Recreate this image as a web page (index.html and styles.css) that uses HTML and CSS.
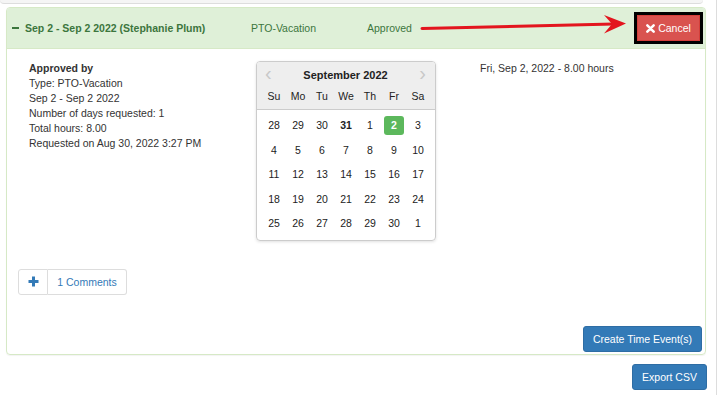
FILE: index.html
```html
<!DOCTYPE html>
<html lang="en">
<head>
<meta charset="utf-8"/>
<title>Time off request</title>
<link rel="stylesheet" href="styles.css">
</head>
<body>
<div class="page">
  <div class="prev-panel"></div>

  <div class="panel">
    <div class="panel-heading">
      <div class="req-title"><span class="collapse-bar"></span>Sep 2 - Sep 2 2022 (Stephanie Plum)</div>
      <div class="req-type">PTO-Vacation</div>
      <div class="req-status">Approved</div>
      <div class="cancel-outline">
        <button class="btn-danger">
          <svg width="9" height="9" viewBox="0 0 10 10"><path d="M1.5 1.5 L8.5 8.5 M8.5 1.5 L1.5 8.5" stroke="#fff" stroke-width="2.8" stroke-linecap="round"/></svg>
          Cancel
        </button>
      </div>
    </div>

    <div class="panel-body">
      <div class="details">
        <div class="details-info">
          <b>Approved by</b><br/>
          Type: PTO-Vacation<br/>
          Sep 2 - Sep 2 2022<br/>
          Number of days requested: 1<br/>
          Total hours: 8.00<br/>
          Requested on Aug 30, 2022 3:27 PM
        </div>

        <div class="calendar">
          <div class="cal-head">
            <div class="cal-title">
              <span class="cal-nav">&lsaquo;</span>
              <b>September 2022</b>
              <span class="cal-nav">&rsaquo;</span>
            </div>
            <div class="cal-grid cal-days">
              <span>Su</span><span>Mo</span><span>Tu</span><span>We</span><span>Th</span><span>Fr</span><span>Sa</span>
            </div>
          </div>
          <div class="cal-grid cal-body">
            <span>28</span><span>29</span><span>30</span><span class="today">31</span><span>1</span><span><i class="picked">2</i></span><span>3</span>
            <span>4</span><span>5</span><span>6</span><span>7</span><span>8</span><span>9</span><span>10</span>
            <span>11</span><span>12</span><span>13</span><span>14</span><span>15</span><span>16</span><span>17</span>
            <span>18</span><span>19</span><span>20</span><span>21</span><span>22</span><span>23</span><span>24</span>
            <span>25</span><span>26</span><span>27</span><span>28</span><span>29</span><span>30</span><span>1</span>
          </div>
        </div>

        <div class="day-list">Fri, Sep 2, 2022 - 8.00 hours</div>
      </div>

      <div class="btn-group">
        <button class="btn-default btn-plus">
          <svg width="11" height="11" viewBox="0 0 11 11"><path d="M5.5 0.5 V10.5 M0.5 5.5 H10.5" stroke="#337ab7" stroke-width="3"/></svg>
        </button>
        <button class="btn-default btn-comments">1 Comments</button>
      </div>

      <div class="panel-actions">
        <button class="btn-primary">Create Time Event(s)</button>
      </div>
    </div>
  </div>

  <div class="page-actions">
    <button class="btn-primary">Export CSV</button>
  </div>

  <!-- annotation arrow pointing at the cancel button -->
  <svg class="arrow" width="723" height="60" viewBox="0 0 723 60">
    <path d="M422 28.5 L614 24" stroke="#e3151e" stroke-width="3" stroke-linecap="round"/>
    <path d="M626 23.5 L604 15 L612 24 L604 33.5 Z" fill="#e3151e"/>
  </svg>
</div>
</body>
</html>
```

FILE: styles.css
```css
body {
    margin: 0;
    font-family: "Liberation Sans", Arial, sans-serif;
    font-size: 10.5px;
    color: #333;
    background-color: #fff;
}
button {
    font-family: inherit;
    font-size: 10.5px;
    white-space: nowrap;
    cursor: pointer;
}
.page {
    position: relative;
    width: 717px;
    height: 395px;
    border-right: 1px solid #ddd;
    box-sizing: border-box;
}
.prev-panel {
    width: 703px;
    height: 3px;
    background-color: #f5f5f5;
    border-bottom: 1px solid #ddd;
    border-radius: 0 0 4px 4px;
}
.panel {
    width: 700px;
    margin: 3px 0 0 6px;
    border: 1px solid #d6e9c6;
    border-radius: 4px;
    box-sizing: border-box;
    box-shadow: 0 1px 1px rgba(0, 0, 0, 0.05);
}
.panel-heading {
    display: flex;
    align-items: center;
    height: 40px;
    padding: 0 2px 0 5px;
    background-color: #dff0d8;
    border-bottom: 1px solid #d6e9c6;
    color: #3c763d;
    border-radius: 3px 3px 0 0;
}
.req-title {
    width: 239px;
    font-weight: bold;
}
.collapse-bar {
    display: inline-block;
    width: 7px;
    height: 2px;
    background-color: #3c763d;
    vertical-align: middle;
    margin: 0 6px 2px 0;
}
.req-type {
    width: 116px;
}
.req-status {
    flex: 1;
}
.cancel-outline {
    border: 3px solid #000;
    display: flex;
}
.btn-danger {
    width: 63px;
    height: 26px;
    border: 1px solid #d43f3a;
    background-color: #d9534f;
    color: #fff;
    padding: 0;
    display: flex;
    align-items: center;
    justify-content: center;
    gap: 3px;
}
.panel-body {
    padding: 12px 3px 2px 11px;
}
.details {
    display: flex;
    align-items: flex-start;
    padding-left: 11px;
}
.details-info {
    width: 227px;
    line-height: 15px;
}
.day-list {
    margin-left: 44px;
    line-height: 15px;
}
.calendar {
    width: 180px;
    border: 1px solid #ccc;
    border-radius: 4px;
    box-sizing: border-box;
    box-shadow: 0 1px 3px rgba(0, 0, 0, 0.12);
    color: #222;
    overflow: hidden;
}
.cal-head {
    background-color: #eee;
    padding: 2px 5px 3px;
    border-bottom: 1px solid #ccc;
}
.cal-title {
    display: flex;
    justify-content: space-between;
    align-items: center;
    height: 22px;
    padding: 0 4px 0 3px;
    font-size: 11px;
}
.cal-nav {
    color: #c8c8c8;
    font-size: 20px;
    line-height: 20px;
    margin-top: -5px;
}
.cal-grid {
    display: grid;
    grid-template-columns: repeat(7, 1fr);
    text-align: center;
}
.cal-days span {
    line-height: 20px;
}
.cal-body {
    padding: 3px 5px 4px;
    grid-auto-rows: 24.5px;
}
.cal-body span {
    display: flex;
    align-items: center;
    justify-content: center;
}
.today {
    font-weight: bold;
}
.picked {
    font-style: normal;
    font-weight: bold;
    display: flex;
    align-items: center;
    justify-content: center;
    width: 20px;
    height: 19px;
    border-radius: 3px;
    background-color: #5cb85c;
    color: #fff;
}
.btn-group {
    display: flex;
    margin-top: 28px;
}
.btn-default {
    height: 26px;
    background-color: #fff;
    border: 1px solid #ddd;
    color: #337ab7;
    padding: 0;
}
.btn-plus {
    width: 30px;
    border-radius: 3px 0 0 3px;
    display: flex;
    align-items: center;
    justify-content: center;
}
.btn-comments {
    width: 79px;
    border-left: none;
    border-radius: 0 3px 3px 0;
}
.panel-actions {
    display: flex;
    justify-content: flex-end;
    margin-top: 31px;
}
.btn-primary {
    height: 26px;
    background-color: #337ab7;
    border: 1px solid #2e6da4;
    border-radius: 3px;
    color: #fff;
    padding: 0;
}
.panel-actions .btn-primary {
    width: 119px;
}
.page-actions {
    display: flex;
    justify-content: flex-end;
    margin: 9px 9px 0 0;
}
.page-actions .btn-primary {
    width: 75px;
}
.arrow {
    position: absolute;
    left: 0;
    top: 0;
    pointer-events: none;
}
```
